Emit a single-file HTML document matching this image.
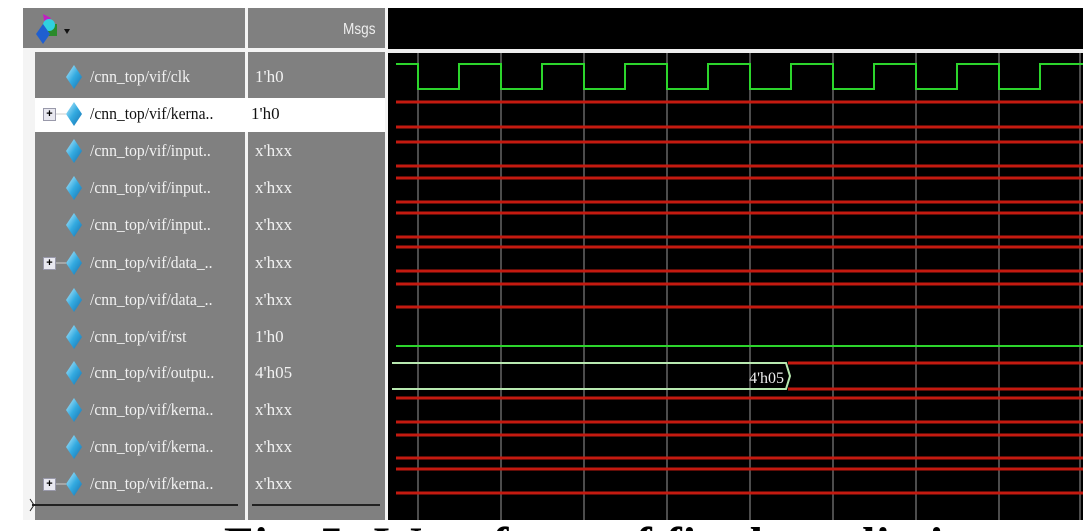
<!DOCTYPE html>
<html><head><meta charset="utf-8"><style>
html,body{margin:0;width:1087px;height:531px;overflow:hidden;background:#fff}
#w{position:relative;width:1087px;height:531px;overflow:hidden;font-family:"Liberation Serif",serif}
.a{position:absolute}
.n{position:absolute;left:90px;color:#f2f2f2;font-size:17px;white-space:nowrap;line-height:20px;transform:scaleX(0.92);transform-origin:left}
.v{position:absolute;left:255px;color:#f2f2f2;font-size:17px;line-height:20px}
.dk{color:#111}
.plus{position:absolute;left:43px;width:11px;height:11px;background:#e8e8f0;border:1px solid #99a;font:bold 11px "Liberation Sans",sans-serif;line-height:11px;text-align:center;color:#000}
</style></head><body><div id="w">
<div class="a" style="left:224px;top:521px;font:bold 48px/48px 'Liberation Serif',serif;color:#000;white-space:nowrap;letter-spacing:1px">Fig. 5: Waveform of final prediction</div>
<div class="a" style="left:23px;top:8px;width:222px;height:512px;background:#808080"></div>
<div class="a" style="left:23px;top:52px;width:12px;height:468px;background:#f4f4f4"></div>
<div class="a" style="left:23px;top:48px;width:222px;height:4px;background:#f4f4f4"></div>
<div class="a" style="left:245px;top:8px;width:3px;height:512px;background:#f4f4f4"></div>
<div class="a" style="left:248px;top:8px;width:137px;height:512px;background:#808080"></div>
<div class="a" style="left:248px;top:48px;width:137px;height:4px;background:#f4f4f4"></div>
<div class="a" style="left:385px;top:8px;width:3px;height:512px;background:#f4f4f4"></div>
<div class="a" style="left:35px;top:98px;width:350px;height:34px;background:#fff"></div>
<div class="a" style="left:343px;top:21px;color:#eee;font:16px 'Liberation Sans',sans-serif;transform:scaleX(0.85);transform-origin:left">Msgs</div>
<svg class="a" style="left:34px;top:10px" width="40" height="36">
<path d="M9 4 L17 8 L11 16Z" fill="#c020c0"/><rect x="14" y="14" width="9" height="12" fill="#2a8a2a"/><circle cx="15" cy="15" r="6" fill="#30d0e0"/><path d="M9 14 L16 24 L9 34 L2 24Z" fill="#1f5fd0"/>
<path d="M30 19 L36 19 L33 24Z" fill="#111"/></svg>
<svg class="a" style="left:0;top:0" width="390" height="520">
<defs><linearGradient id="g" x1="0" y1="0" x2="1" y2="1"><stop offset="0" stop-color="#bfefff"/><stop offset=".5" stop-color="#33aae0"/><stop offset="1" stop-color="#1570b0"/></linearGradient></defs>
<g fill="url(#g)">
<path d="M74 65 L82 77 L74 89 L66 77Z"/><path d="M74 102 L82 114 L74 126 L66 114Z"/><path d="M74 139 L82 151 L74 163 L66 151Z"/><path d="M74 176 L82 188 L74 200 L66 188Z"/><path d="M74 213 L82 225 L74 237 L66 225Z"/><path d="M74 251 L82 263 L74 275 L66 263Z"/><path d="M74 288 L82 300 L74 312 L66 300Z"/><path d="M74 325 L82 337 L74 349 L66 337Z"/><path d="M74 361 L82 373 L74 385 L66 373Z"/><path d="M74 398 L82 410 L74 422 L66 410Z"/><path d="M74 435 L82 447 L74 459 L66 447Z"/><path d="M74 472 L82 484 L74 496 L66 484Z"/></g>
<g stroke="#ccc"><line x1="55" y1="114" x2="66" y2="114"/><line x1="55" y1="263" x2="66" y2="263"/><line x1="55" y1="484" x2="66" y2="484"/></g>
<line x1="32" y1="505" x2="238" y2="505" stroke="#222" stroke-width="2"/><line x1="252" y1="505" x2="380" y2="505" stroke="#222" stroke-width="2"/>
<path d="M30 499 L34 505 L30 511" fill="none" stroke="#222"/>
</svg>
<div class="plus" style="top:108px">+</div><div class="plus" style="top:257px">+</div><div class="plus" style="top:478px">+</div>
<div class="n" style="top:67px">/cnn_top/vif/clk</div><div class="v" style="top:67px">1'h0</div>
<div class="n dk" style="top:104px">/cnn_top/vif/kerna..</div><div class="v dk" style="top:104px;left:251px">1'h0</div>
<div class="n" style="top:141px">/cnn_top/vif/input..</div><div class="v" style="top:141px">x'hxx</div>
<div class="n" style="top:178px">/cnn_top/vif/input..</div><div class="v" style="top:178px">x'hxx</div>
<div class="n" style="top:215px">/cnn_top/vif/input..</div><div class="v" style="top:215px">x'hxx</div>
<div class="n" style="top:253px">/cnn_top/vif/data_..</div><div class="v" style="top:253px">x'hxx</div>
<div class="n" style="top:290px">/cnn_top/vif/data_..</div><div class="v" style="top:290px">x'hxx</div>
<div class="n" style="top:327px">/cnn_top/vif/rst</div><div class="v" style="top:327px">1'h0</div>
<div class="n" style="top:363px">/cnn_top/vif/outpu..</div><div class="v" style="top:363px">4'h05</div>
<div class="n" style="top:400px">/cnn_top/vif/kerna..</div><div class="v" style="top:400px">x'hxx</div>
<div class="n" style="top:437px">/cnn_top/vif/kerna..</div><div class="v" style="top:437px">x'hxx</div>
<div class="n" style="top:474px">/cnn_top/vif/kerna..</div><div class="v" style="top:474px">x'hxx</div>
<svg class="a" style="left:388px;top:8px" width="695" height="512">
<rect width="695" height="512" fill="#000"/><rect y="41" width="695" height="4" fill="#eee"/>
<g stroke="#999" stroke-width="1"><line x1="30" y1="45" x2="30" y2="512"/><line x1="113" y1="45" x2="113" y2="512"/><line x1="196" y1="45" x2="196" y2="512"/><line x1="279" y1="45" x2="279" y2="512"/><line x1="362" y1="45" x2="362" y2="512"/><line x1="445" y1="45" x2="445" y2="512"/><line x1="528" y1="45" x2="528" y2="512"/><line x1="611" y1="45" x2="611" y2="512"/><line x1="692" y1="45" x2="692" y2="512"/></g>
<path d="M8 56 H30 V81 H71 V56 H113 V81 H154 V56 H196 V81 H237 V56 H279 V81 H320 V56 H362 V81 H403 V56 H445 V81 H486 V56 H528 V81 H569 V56 H611 V81 H652 V56 H695" fill="none" stroke="#2cd52c" stroke-width="2"/>
<g stroke="#c41a10" stroke-width="3"><line x1="8" y1="94" x2="695" y2="94"/><line x1="8" y1="119" x2="695" y2="119"/><line x1="8" y1="134" x2="695" y2="134"/><line x1="8" y1="158" x2="695" y2="158"/><line x1="8" y1="170" x2="695" y2="170"/><line x1="8" y1="194" x2="695" y2="194"/><line x1="8" y1="205" x2="695" y2="205"/><line x1="8" y1="229" x2="695" y2="229"/><line x1="8" y1="239" x2="695" y2="239"/><line x1="8" y1="263" x2="695" y2="263"/><line x1="8" y1="276" x2="695" y2="276"/><line x1="8" y1="299" x2="695" y2="299"/><line x1="400" y1="355" x2="695" y2="355"/><line x1="400" y1="381" x2="695" y2="381"/><line x1="8" y1="390" x2="695" y2="390"/><line x1="8" y1="414" x2="695" y2="414"/><line x1="8" y1="427" x2="695" y2="427"/><line x1="8" y1="450" x2="695" y2="450"/><line x1="8" y1="461" x2="695" y2="461"/><line x1="8" y1="485" x2="695" y2="485"/></g>
<line x1="8" y1="338" x2="695" y2="338" stroke="#2cd52c" stroke-width="2"/>
<path d="M4 355 H398 L402 368 L398 381 H4" fill="none" stroke="#b8e8b0" stroke-width="2"/>
<text x="396" y="375" text-anchor="end" fill="#eee" font-family="Liberation Serif" font-size="16">4'h05</text>
</svg>
</div></body></html>
